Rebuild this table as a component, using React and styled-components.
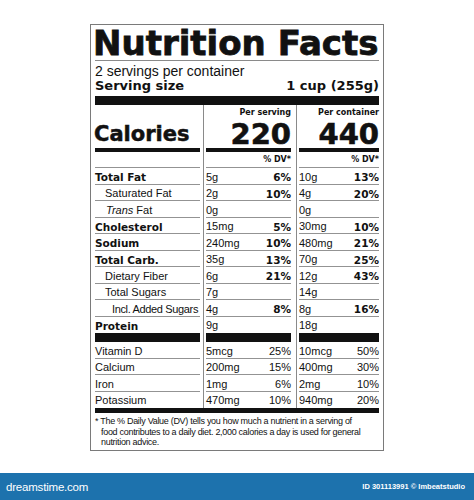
import React from 'react';
import styled, { createGlobalStyle } from 'styled-components';

const GlobalStyle = createGlobalStyle`
    html, body {
        margin: 0;
        padding: 0;
        background: #fff;
    }
    body {
        font-family: "Liberation Sans", Arial, sans-serif;
        color: #111;
    }
`;

const nutrients = [
    { name: 'Total Fat', bold: true, a: '5g', p: '6%', b: '10g', q: '13%' },
    { name: 'Saturated Fat', indent: 10, a: '2g', p: '10%', b: '4g', q: '20%' },
    { name: <><i>Trans</i> Fat</>, indent: 11, a: '0g', b: '0g' },
    { name: 'Cholesterol', bold: true, a: '15mg', p: '5%', b: '30mg', q: '10%' },
    { name: 'Sodium', bold: true, a: '240mg', p: '10%', b: '480mg', q: '21%' },
    { name: 'Total Carb.', bold: true, a: '35g', p: '13%', b: '70g', q: '25%' },
    { name: 'Dietary Fiber', indent: 10, a: '6g', p: '21%', b: '12g', q: '43%' },
    { name: 'Total Sugars', indent: 10, a: '7g', b: '14g' },
    { name: 'Incl. Added Sugars', indent: 17, tight: true, a: '4g', p: '8%', b: '8g', q: '16%' },
    { name: 'Protein', bold: true, a: '9g', b: '18g', last: true },
];

const vitamins = [
    { name: 'Vitamin D', a: '5mcg', p: '25%', b: '10mcg', q: '50%' },
    { name: 'Calcium', a: '200mg', p: '15%', b: '400mg', q: '30%' },
    { name: 'Iron', a: '1mg', p: '6%', b: '2mg', q: '10%' },
    { name: 'Potassium', a: '470mg', p: '10%', b: '940mg', q: '20%', last: true },
];

const NutrientRow = ({ item, light }) => (
    <Row $h={16.5}>
        <Cell $col={0}>
            <Line $last={item.last} $indent={item.indent}>
                <Name $bold={item.bold} $tight={item.tight}>{item.name}</Name>
            </Line>
        </Cell>
        <Cell $col={1}>
            <Line $last={item.last}>
                <Amount>{item.a}</Amount>
                {item.p && <Pct $bold={!light}>{item.p}</Pct>}
            </Line>
        </Cell>
        <Cell $col={2}>
            <Line $last={item.last}>
                <Amount>{item.b}</Amount>
                {item.q && <Pct $bold={!light}>{item.q}</Pct>}
            </Line>
        </Cell>
    </Row>
);

const App = () => {
    return (
        <Page>
            <GlobalStyle />
            <Stage>
                <Label>
                    <Title>Nutrition Facts</Title>
                    <Rule />
                    <Servings>2 servings per container</Servings>
                    <ServingSize>
                        <span>Serving size</span>
                        <span>1 cup (255g)</span>
                    </ServingSize>
                    <Bar $h={9} $mt={3} />

                    <Row $h={47}>
                        <Cell $col={0}>
                            <CalTitle>Calories</CalTitle>
                            <Bar $h={4} />
                        </Cell>
                        <Cell $col={1}>
                            <PerLabel>Per serving</PerLabel>
                            <BigNum>220</BigNum>
                            <Bar $h={4} $mt={1} />
                        </Cell>
                        <Cell $col={2}>
                            <PerLabel>Per container</PerLabel>
                            <BigNum>440</BigNum>
                            <Bar $h={4} $mt={1} />
                        </Cell>
                    </Row>

                    <Row $h={16}>
                        <Cell $col={0}><Line /></Cell>
                        <Cell $col={1}><Line $right><DvHead>% DV*</DvHead></Line></Cell>
                        <Cell $col={2}><Line $right><DvHead>% DV*</DvHead></Line></Cell>
                    </Row>

                    {nutrients.map((n, i) => <NutrientRow key={i} item={n} />)}

                    <Row $h={9}>
                        <Cell $col={0}><Bar $h={9} /></Cell>
                        <Cell $col={1}><Bar $h={9} /></Cell>
                        <Cell $col={2}><Bar $h={9} /></Cell>
                    </Row>

                    {vitamins.map((n, i) => <NutrientRow key={i} item={n} light />)}

                    <Bar $h={5} />
                    <Footnote>
                        * The % Daily Value (DV) tells you how much a nutrient in a serving of<br />
                        food contributes to a daily diet. 2,000 calories a day is used for general<br />
                        nutrition advice.
                    </Footnote>
                </Label>
            </Stage>
            <Footer>
                <Brand>dreamstime.com</Brand>
                <Credit>ID 301113991 © Imbeatstudio</Credit>
            </Footer>
        </Page>
    );
}

const Page = styled.div`
    width: 474px;
    height: 500px;
    display: flex;
    flex-direction: column;
    overflow: hidden;
`;

const Stage = styled.main`
    flex: 1;
    display: flex;
    justify-content: center;
    align-items: flex-start;
    padding-top: 24px;
`;

const Label = styled.section`
    width: 294px;
    box-sizing: border-box;
    border: 1px solid #7a7a7a;
    padding: 0 4px;
`;

const Title = styled.h1`
    margin: 0 0 0 -2px;
    padding-top: 1px;
    font: bold 34px/34px "DejaVu Sans", sans-serif;
    -webkit-text-stroke: 0.8px #111;
    white-space: nowrap;
`;

const Rule = styled.div`
    height: 1px;
    background: #8a8a8a;
`;

const Servings = styled.p`
    margin: 3px 0 0;
    font-size: 14px;
    line-height: 15px;
`;

const ServingSize = styled.div`
    display: flex;
    justify-content: space-between;
    font: bold 13px/14px "DejaVu Sans", sans-serif;
`;

const Bar = styled.div`
    height: ${p => p.$h}px;
    margin-top: ${p => p.$mt || 0}px;
    background: #111;
    flex-shrink: 0;
`;

const Row = styled.div`
    display: grid;
    grid-template-columns: 108px 93px 83px;
    height: ${p => p.$h}px;
`;

const Cell = styled.div`
    box-sizing: border-box;
    display: flex;
    flex-direction: column;
    justify-content: flex-end;
    padding: ${p => p.$col === 0 ? '0 3px 0 0' : p.$col === 1 ? '0 5px 0 2px' : '0 0 0 2px'};
    border-left: ${p => p.$col === 0 ? 'none' : '1px solid #8a8a8a'};
`;

const Line = styled.div`
    flex: 1;
    display: flex;
    align-items: flex-end;
    justify-content: ${p => p.$right ? 'flex-end' : 'space-between'};
    padding: 0 0 ${p => p.$last ? 2 : 1}px ${p => p.$indent || 0}px;
    border-bottom: ${p => p.$last ? 'none' : '1px solid #939393'};
    line-height: 1;
    white-space: nowrap;
`;

const Name = styled.span`
    font-family: ${p => p.$bold ? '"DejaVu Sans", sans-serif' : '"Liberation Sans", Arial, sans-serif'};
    font-weight: ${p => p.$bold ? 'bold' : 'normal'};
    font-size: ${p => p.$bold ? '10.5px' : '11px'};
    letter-spacing: ${p => p.$tight ? '-0.35px' : 'normal'};
`;

const Amount = styled.span`
    font-size: 11px;
`;

const Pct = styled.span`
    font-family: ${p => p.$bold ? '"DejaVu Sans", sans-serif' : '"Liberation Sans", Arial, sans-serif'};
    font-weight: ${p => p.$bold ? 'bold' : 'normal'};
    font-size: ${p => p.$bold ? '10.5px' : '11px'};
`;

const CalTitle = styled.div`
    font: bold 21px/21px "DejaVu Sans", sans-serif;
    -webkit-text-stroke: 0.5px #111;
    margin: 0 0 3px -1px;
`;

const PerLabel = styled.div`
    font: bold 8px/10px "DejaVu Sans", sans-serif;
    text-align: right;
`;

const BigNum = styled.div`
    font: bold 29px/26px "DejaVu Sans", sans-serif;
    -webkit-text-stroke: 0.6px #111;
    margin-top: 3px;
    text-align: right;
`;

const DvHead = styled.span`
    font: bold 8px/1 "DejaVu Sans", sans-serif;
    padding-bottom: 2px;
`;

const Footnote = styled.p`
    margin: 0;
    padding: 3px 0 2px 6px;
    text-indent: -6px;
    font-size: 9px;
    letter-spacing: -0.3px;
    line-height: 10.5px;
    white-space: nowrap;
`;

const Footer = styled.footer`
    height: 27px;
    flex-shrink: 0;
    display: flex;
    align-items: center;
    justify-content: space-between;
    padding: 0 9px 0 6px;
    background: #1d72ad;
    color: #fff;
`;

const Brand = styled.span`
    font-size: 11.5px;
    letter-spacing: -0.2px;
`;

const Credit = styled.span`
    font-size: 7.5px;
    font-weight: bold;
`;

export default App;
